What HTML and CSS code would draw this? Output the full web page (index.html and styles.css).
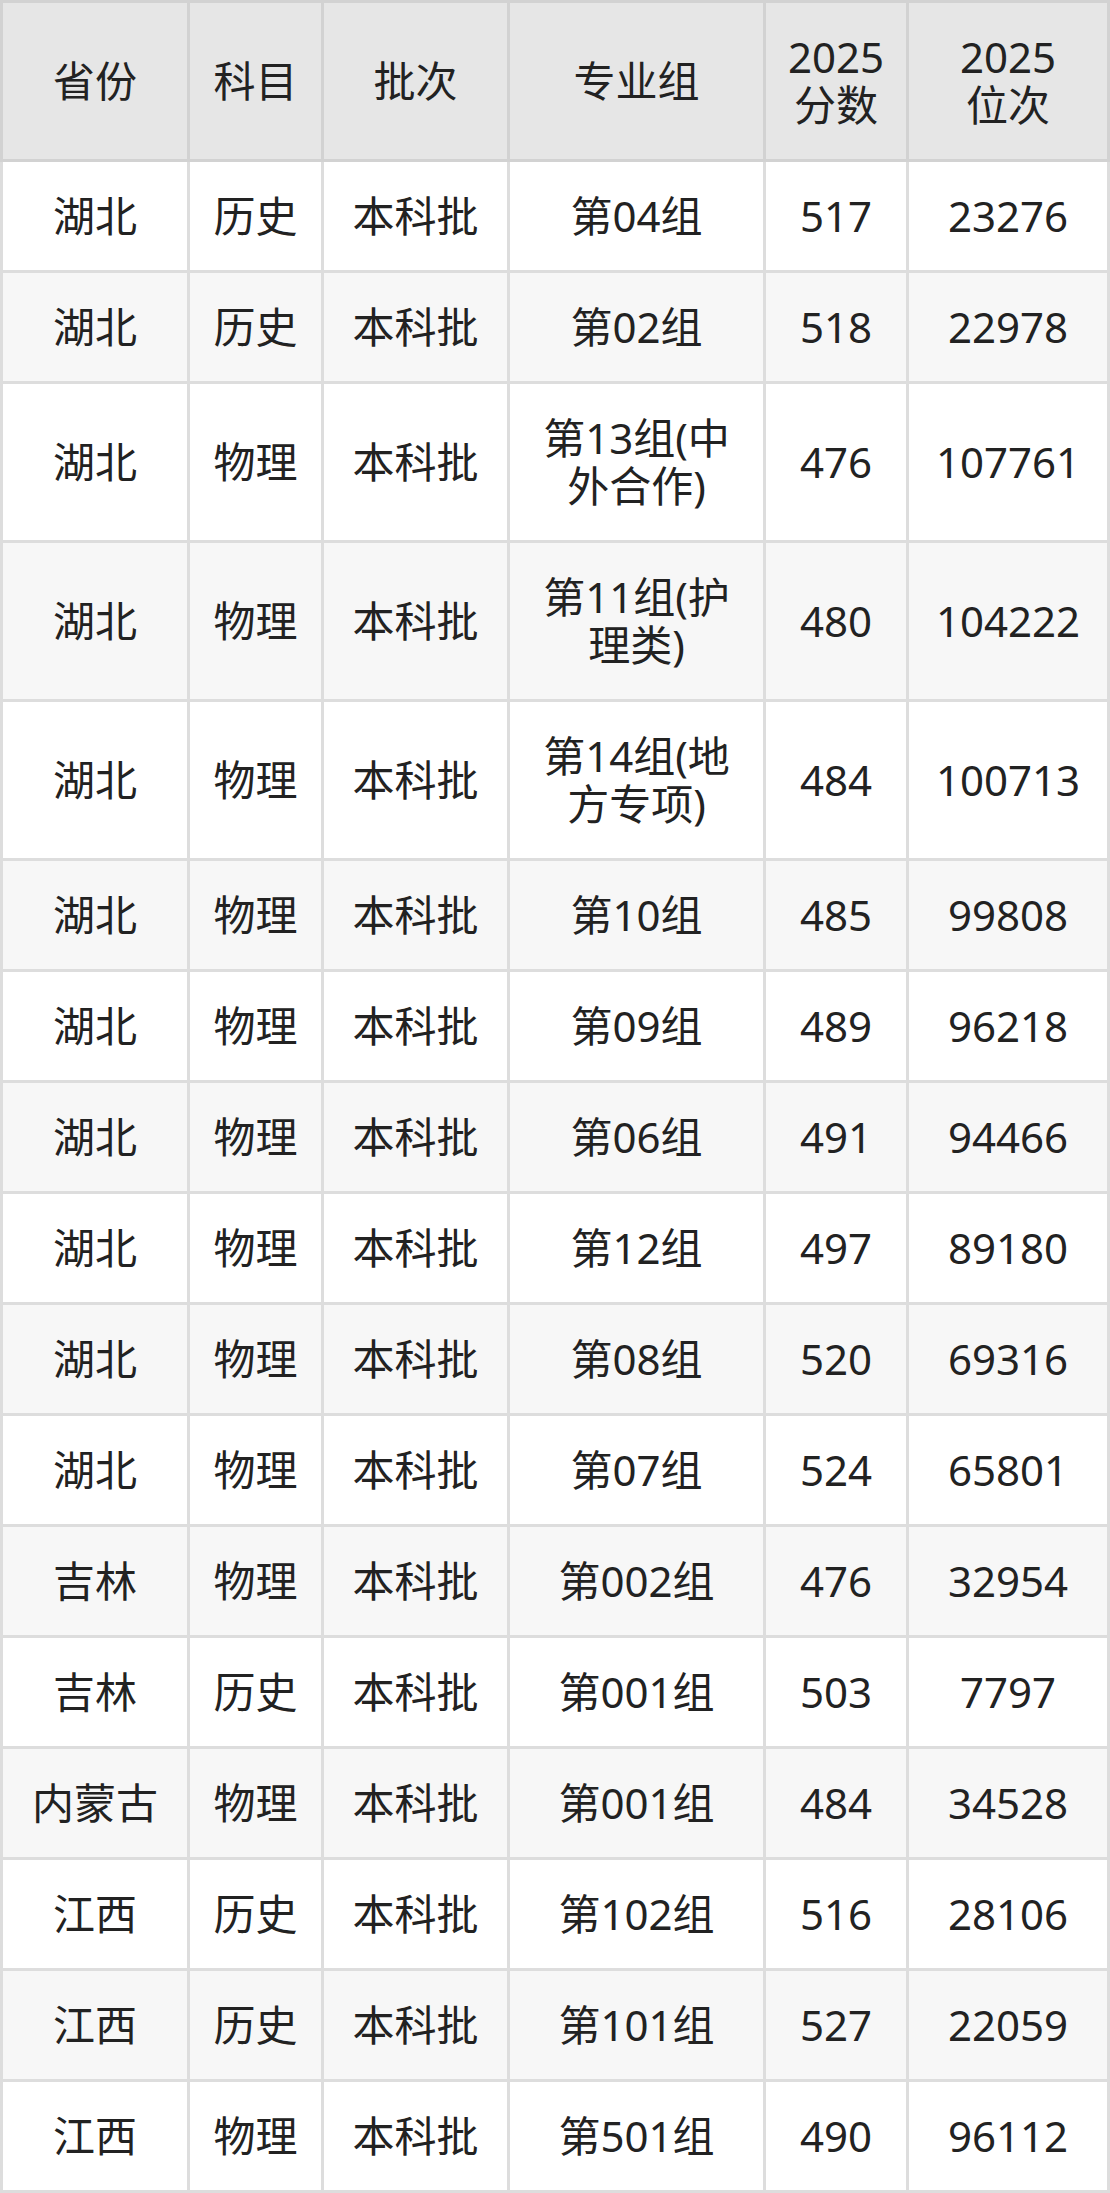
FILE: index.html
```html
<!DOCTYPE html>
<html lang="zh-CN">
<head>
<meta charset="utf-8">
<title>录取分数</title>
<link rel="stylesheet" href="styles.css">
</head>
<body>
<table class="score-table">
  <colgroup>
    <col class="c-prov">
    <col class="c-subj">
    <col class="c-batch">
    <col class="c-group">
    <col class="c-score">
    <col class="c-rank">
  </colgroup>
  <thead>
    <tr>
      <th>省份</th>
      <th>科目</th>
      <th>批次</th>
      <th class="group">专业组</th>
      <th>2025<br>分数</th>
      <th>2025<br>位次</th>
    </tr>
  </thead>
  <tbody>
    <tr><td>湖北</td><td>历史</td><td>本科批</td><td class="group">第04组</td><td>517</td><td>23276</td></tr>
    <tr><td>湖北</td><td>历史</td><td>本科批</td><td class="group">第02组</td><td>518</td><td>22978</td></tr>
    <tr><td>湖北</td><td>物理</td><td>本科批</td><td class="group">第13组(中外合作)</td><td>476</td><td>107761</td></tr>
    <tr><td>湖北</td><td>物理</td><td>本科批</td><td class="group">第11组(护理类)</td><td>480</td><td>104222</td></tr>
    <tr><td>湖北</td><td>物理</td><td>本科批</td><td class="group">第14组(地方专项)</td><td>484</td><td>100713</td></tr>
    <tr><td>湖北</td><td>物理</td><td>本科批</td><td class="group">第10组</td><td>485</td><td>99808</td></tr>
    <tr><td>湖北</td><td>物理</td><td>本科批</td><td class="group">第09组</td><td>489</td><td>96218</td></tr>
    <tr><td>湖北</td><td>物理</td><td>本科批</td><td class="group">第06组</td><td>491</td><td>94466</td></tr>
    <tr><td>湖北</td><td>物理</td><td>本科批</td><td class="group">第12组</td><td>497</td><td>89180</td></tr>
    <tr><td>湖北</td><td>物理</td><td>本科批</td><td class="group">第08组</td><td>520</td><td>69316</td></tr>
    <tr><td>湖北</td><td>物理</td><td>本科批</td><td class="group">第07组</td><td>524</td><td>65801</td></tr>
    <tr><td>吉林</td><td>物理</td><td>本科批</td><td class="group">第002组</td><td>476</td><td>32954</td></tr>
    <tr><td>吉林</td><td>历史</td><td>本科批</td><td class="group">第001组</td><td>503</td><td>7797</td></tr>
    <tr><td>内蒙古</td><td>物理</td><td>本科批</td><td class="group">第001组</td><td>484</td><td>34528</td></tr>
    <tr><td>江西</td><td>历史</td><td>本科批</td><td class="group">第102组</td><td>516</td><td>28106</td></tr>
    <tr><td>江西</td><td>历史</td><td>本科批</td><td class="group">第101组</td><td>527</td><td>22059</td></tr>
    <tr><td>江西</td><td>物理</td><td>本科批</td><td class="group">第501组</td><td>490</td><td>96112</td></tr>
  </tbody>
</table>
</body>
</html>
```
FILE: styles.css
```css
html, body {
  margin: 0;
  padding: 0;
  background: #ffffff;
}

.score-table {
  width: 1110px;
  border-collapse: collapse;
  table-layout: fixed;
  font-family: "Noto Sans", "Noto Sans CJK SC", sans-serif;
  font-size: 42px;
  line-height: 48px;
  color: #222222;
}

.c-prov { width: 187px; }
.c-subj { width: 134px; }
.c-batch { width: 186px; }
.c-group { width: 256px; }
.c-score { width: 143px; }
.c-rank { width: 201px; }

.score-table th,
.score-table td {
  padding: 30px 10px;
  text-align: center;
  vertical-align: middle;
  font-weight: normal;
}

.score-table th {
  background: #e6e6e6;
  border: 3px solid #d2d2d2;
}

.score-table td {
  border: 3px solid #dddddd;
}

.score-table .group {
  padding-left: 24px;
  padding-right: 24px;
}

.score-table tbody tr:nth-child(even) td {
  background: #f7f7f7;
}
```
